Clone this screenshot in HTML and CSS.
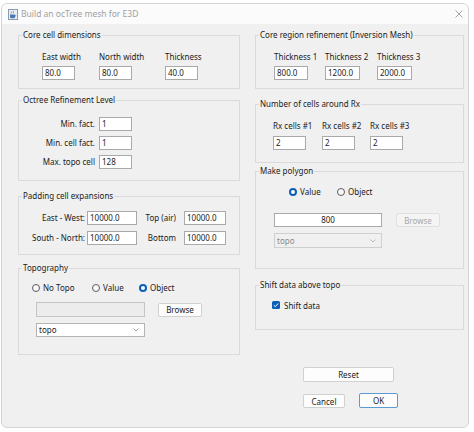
FILE: index.html
```html
<!DOCTYPE html>
<html>
<head>
<meta charset="utf-8">
<title>Build an ocTree mesh for E3D</title>
<link rel="stylesheet" href="styles.css">
</head>
<body>
<div class="window">
  <div class="titlebar">
    <svg class="app-icon" width="10" height="11" viewBox="0 0 10 11">
      <rect x="0.5" y="0.5" width="9" height="10" fill="#e8eef5" stroke="#8a9bb0"/>
      <path d="M3 2.5 Q4 3.5 3.2 4.5 M5 2 Q6 3 5.2 4.2" stroke="#c0603a" fill="none" stroke-width="0.7"/>
      <path d="M2 5.5 H7 V8 Q7 9.2 5.5 9.2 H3.5 Q2 9.2 2 8 Z" fill="#4a78b0"/>
      <path d="M7 6 Q8.6 6.3 7 7.8" stroke="#4a78b0" fill="none" stroke-width="0.7"/>
    </svg>
    <span class="title">Build an ocTree mesh for E3D</span>
    <svg class="close" width="8" height="8" viewBox="0 0 8 8">
      <path d="M0.5 0.5 L7.5 7.5 M7.5 0.5 L0.5 7.5" stroke="#9a9a9a" stroke-width="0.9"/>
    </svg>
  </div>
  <div class="content">
    <div class="col col-left">
      <fieldset class="group g-core">
        <legend>Core cell dimensions</legend>
        <div class="body b-core-l">
          <div class="stack3 core-cols">
            <div class="cell"><span class="lbl">East width</span><span class="field w33">80.0</span></div>
            <div class="cell"><span class="lbl">North width</span><span class="field w33">80.0</span></div>
            <div class="cell"><span class="lbl">Thickness</span><span class="field w33">40.0</span></div>
          </div>
        </div>
      </fieldset>

      <fieldset class="group g-octree">
        <legend>Octree Refinement Level</legend>
        <div class="body b-octree">
          <div class="form2">
            <span class="rlbl">Min. fact.</span><span class="field w33">1</span>
            <span class="rlbl">Min. cell fact.</span><span class="field w33">1</span>
            <span class="rlbl">Max. topo cell</span><span class="field w33">128</span>
          </div>
        </div>
      </fieldset>

      <fieldset class="group g-pad">
        <legend>Padding cell expansions</legend>
        <div class="body b-pad">
          <div class="form4">
            <span class="rlbl">East - West:</span><span class="field">10000.0</span>
            <span class="rlbl">Top (air)</span><span class="field">10000.0</span>
            <span class="rlbl">South - North:</span><span class="field">10000.0</span>
            <span class="rlbl">Bottom</span><span class="field">10000.0</span>
          </div>
        </div>
      </fieldset>

      <fieldset class="group g-topo">
        <legend>Topography</legend>
        <div class="body b-topo">
          <div class="radios">
            <span class="radio-item r-w60"><span class="radio"></span>No Topo</span>
            <span class="radio-item r-w47"><span class="radio"></span>Value</span>
            <span class="radio-item"><span class="radio on"></span>Object</span>
          </div>
          <div class="row-browse topo-row">
            <span class="field disabled w109"></span>
            <span class="btn browse">Browse</span>
          </div>
          <div class="combo w109">topo<svg class="chev" width="6" height="4" viewBox="0 0 6 4"><path d="M0.5 0.5 L3 3 L5.5 0.5" stroke="#888" fill="none" stroke-width="0.8"/></svg></div>
        </div>
      </fieldset>
    </div>

    <div class="col col-right">
      <fieldset class="group g-core">
        <legend>Core region refinement (Inversion Mesh)</legend>
        <div class="body b-core-r">
          <div class="stack3 region-cols">
            <div class="cell"><span class="lbl">Thickness 1</span><span class="field w34">800.0</span></div>
            <div class="cell"><span class="lbl">Thickness 2</span><span class="field w35">1200.0</span></div>
            <div class="cell"><span class="lbl">Thickness 3</span><span class="field w35">2000.0</span></div>
          </div>
        </div>
      </fieldset>

      <fieldset class="group g-rx">
        <legend>Number of cells around Rx</legend>
        <div class="body b-rx">
          <div class="stack3 rx-cols">
            <div class="cell"><span class="lbl">Rx cells #1</span><span class="field w33">2</span></div>
            <div class="cell"><span class="lbl">Rx cells #2</span><span class="field w33">2</span></div>
            <div class="cell"><span class="lbl">Rx cells #3</span><span class="field w33">2</span></div>
          </div>
        </div>
      </fieldset>

      <fieldset class="group g-poly">
        <legend>Make polygon</legend>
        <div class="body b-poly">
          <div class="radios poly-radios">
            <span class="radio-item r-w48"><span class="radio on"></span>Value</span>
            <span class="radio-item"><span class="radio"></span>Object</span>
          </div>
          <div class="row-browse poly-row">
            <span class="field w108 center">800</span>
            <span class="btn browse disabled-btn">Browse</span>
          </div>
          <div class="combo w108 disabled-combo">topo<svg class="chev" width="6" height="4" viewBox="0 0 6 4"><path d="M0.5 0.5 L3 3 L5.5 0.5" stroke="#aaa" fill="none" stroke-width="0.8"/></svg></div>
        </div>
      </fieldset>

      <fieldset class="group g-shift">
        <legend>Shift data above topo</legend>
        <div class="body b-shift">
          <div class="check-row">
            <span class="checkbox"><svg width="8" height="8" viewBox="0 0 8 8"><path d="M1.8 4.2 L3.3 5.6 L6.2 2.5" stroke="#fff" fill="none" stroke-width="1"/></svg></span>
            <span>Shift data</span>
          </div>
        </div>
      </fieldset>

      <div class="buttons">
        <span class="btn reset">Reset</span>
        <div class="btn-row">
          <span class="btn cancel">Cancel</span>
          <span class="btn ok">OK</span>
        </div>
      </div>
    </div>
  </div>
</div>
</body>
</html>
```

FILE: styles.css
```css
html, body {
  margin: 0;
  padding: 0;
  background: #ffffff;
}
body {
  font-family: "Noto Sans", "Open Sans", sans-serif;
  font-size: 8px;
  color: #1b1b1b;
  width: 474px;
  height: 432px;
  overflow: hidden;
}
.window {
  margin: 3px 0 0 1px;
  width: 468px;
  height: 425px;
  box-sizing: border-box;
  background: #f0f0f0;
  border: 1px solid #d4d4d4;
  border-radius: 6px;
  overflow: hidden;
}
.titlebar {
  height: 20px;
  background: #fbfbfb;
  display: flex;
  align-items: center;
  padding-left: 6px;
  padding-right: 3px;
}
.app-icon { flex: none; }
.title {
  margin-left: 3px;
  color: #a0a0a0;
  font-size: 8.5px;
  flex: 1;
  line-height: 10px;
}
.close { flex: none; margin-right: 2px; }

.content {
  display: flex;
  padding-left: 16px;
  gap: 15px;
}
.col { display: flex; flex-direction: column; }
.col-left { width: 222px; }
.col-right { width: 209px; }

.group {
  margin: 0;
  padding: 0;
  border: 1px solid #dadada;
  min-width: 0;
}
.group legend {
  padding: 0 1px;
  margin-left: 3px;
  line-height: 10px;
  font-size: 8px;
}

.lbl, .rlbl { line-height: 10px; white-space: nowrap; }
.field {
  display: block;
  box-sizing: border-box;
  height: 14px;
  line-height: 12px;
  background: #ffffff;
  border: 1px solid #a9a9a9;
  padding: 0 2px;
  white-space: nowrap;
  overflow: hidden;
}
.field.center { text-align: center; }
.field.disabled { background: #ececec; border-color: #c4c4c4; height: 15px; }
.w33 { width: 33px; }
.w34 { width: 34px; }
.w35 { width: 35px; }
.w108 { width: 108px; }
.w109 { width: 109px; }

.stack3 { display: grid; }
.cell { display: flex; flex-direction: column; }
.cell .field { margin-top: 4px; }

/* Core cell dimensions */
.col-left .g-core, .col-right .g-core { margin-top: 6px; }
.b-core-l { padding: 12px 0 8px 23px; }
.core-cols { grid-template-columns: 57px 66px 40px; }
.b-core-r { padding: 12px 0 8px 18px; }
.region-cols { grid-template-columns: 51px 52px 40px; }

/* Octree */
.g-octree { margin-top: 6px; }
.b-octree { padding: 12px 0 11px 0; }
.form2 {
  display: grid;
  grid-template-columns: 76px 33px;
  column-gap: 4px;
  row-gap: 5px;
  align-items: center;
}
.rlbl { text-align: right; }

/* Padding */
.g-pad { margin-top: 10px; }
.b-pad { padding: 10px 0 9px 0; }
.form4 {
  display: grid;
  grid-template-columns: 68px 50px 47px 42px;
  row-gap: 6px;
  align-items: center;
}
.form4 .rlbl { padding-right: 2px; }
.form4 .rlbl:nth-child(4n+3) { padding-right: 8px; }

/* Topography */
.g-topo { margin-top: 8px; }
.b-topo { padding: 9px 0 17px 13px; }
.radios { display: flex; align-items: center; height: 12px; }
.radio-item { display: flex; align-items: center; line-height: 12px; }
.r-w60 { width: 60px; }
.r-w47 { width: 47px; }
.r-w48 { width: 48px; }
.radio {
  width: 8px;
  height: 8px;
  box-sizing: border-box;
  border-radius: 50%;
  border: 1px solid #5c5c5c;
  background: #f7f7f7;
  margin-right: 3px;
  flex: none;
}
.radio.on {
  border: 2.5px solid #0a60b8;
  background: #ffffff;
}
.row-browse { display: flex; align-items: center; margin-top: 8px; gap: 13px; }
.topo-row { padding-left: 4px; }
.btn {
  display: flex;
  align-items: center;
  justify-content: center;
  box-sizing: border-box;
  background: #fdfdfd;
  border: 1px solid #d0d0d0;
  border-radius: 2px;
  height: 15px;
}
.browse { width: 44px; height: 14px; }
.combo {
  margin-top: 6px;
  box-sizing: border-box;
  height: 14px;
  line-height: 12px;
  background: #ffffff;
  border: 1px solid #b4b4b4;
  padding: 0 2px;
  display: flex;
  align-items: center;
  justify-content: space-between;
}
.b-topo .combo { margin-left: 4px; }
.chev { margin-right: 3px; }

/* Rx */
.g-rx { margin-top: 10px; }
.b-rx { padding: 12px 0 12px 17px; }
.rx-cols { grid-template-columns: 49px 48px 40px; }
.rx-cols .field { margin-top: 5px; }

/* Polygon */
.g-poly { margin-top: 3px; }
.b-poly { padding: 10px 0 20px 18px; }
.poly-radios { padding-left: 15px; }
.poly-row { margin-top: 15px; gap: 14px; }
.disabled-btn { color: #a8a8a8; background: #f4f4f4; border-color: #e0e0e0; }
.disabled-combo { color: #8a8a8a; background: #f0f0f0; border-color: #cfcfcf; height: 15px; }

/* Shift */
.g-shift { margin-top: 11px; }
.b-shift { padding: 10px 0 19px 16px; }
.check-row { display: flex; align-items: center; height: 10px; gap: 4px; }
.checkbox {
  width: 8px;
  height: 8px;
  border-radius: 1.5px;
  background: #0a60b8;
  display: flex;
  align-items: center;
  justify-content: center;
}

/* Buttons */
.buttons { margin-top: 37px; padding-left: 48px; display: flex; flex-direction: column; }
.reset { width: 91px; }
.btn-row { display: flex; gap: 14px; margin-top: 11px; align-items: flex-start; }
.cancel { width: 42px; height: 14px; margin-top: 1px; }
.ok { width: 39px; border: 1px solid #5b9bd5; }
```
